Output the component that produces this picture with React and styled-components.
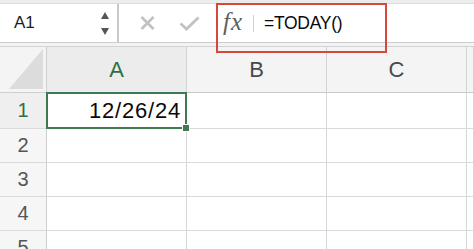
import React from 'react';
import styled, { createGlobalStyle } from 'styled-components';

const GlobalStyle = createGlobalStyle`
  html, body {
    margin: 0;
    padding: 0;
    background: #ffffff;
  }
  body {
    font-family: "Liberation Sans", Arial, sans-serif;
  }
`;

const Window = styled.div`
  width: 474px;
  height: 249px;
  overflow: hidden;
  background: #ffffff;
  display: flex;
  flex-direction: column;
`;

const TopEdge = styled.div`
  height: 3px;
  flex-shrink: 0;
  background: #ececec;
`;

const FormulaBar = styled.div`
  display: flex;
  align-items: center;
  height: 40px;
  box-sizing: border-box;
  flex-shrink: 0;
  border-top: 1px solid #dcdcdc;
  border-bottom: 1px solid #cdcdcd;
  position: relative;
  z-index: 2;
`;

const NameBox = styled.div`
  width: 119px;
  height: 100%;
  box-sizing: border-box;
  display: flex;
  align-items: center;
  justify-content: space-between;
  padding: 0 8px 0 14px;
  border-right: 2px solid #c9c9c9;
`;

const NameText = styled.span`
  font-size: 17px;
  color: #1c1c1c;
`;

const Spinner = styled.div`
  display: flex;
  flex-direction: column;
  gap: 9px;
`;

const Arrow = styled.span`
  width: 0;
  height: 0;
  border-left: 4px solid transparent;
  border-right: 4px solid transparent;
  ${p => p.down
    ? 'border-top: 7px solid #555555;'
    : 'border-bottom: 7px solid #555555;'}
`;

const Actions = styled.div`
  display: flex;
  align-items: center;
  gap: 24px;
  margin-left: 21px;
  svg {
    display: block;
  }
`;

const FormulaInput = styled.div`
  position: relative;
  width: 171px;
  height: 100%;
  box-sizing: border-box;
  margin-left: 16px;
  padding-left: 7px;
  display: flex;
  align-items: center;

  &::after {
    content: "";
    position: absolute;
    top: -1px;
    left: 0;
    width: 171px;
    height: 50px;
    box-sizing: border-box;
    border: 2px solid #d9473c;
    pointer-events: none;
  }
`;

const Fx = styled.span`
  font-family: "Liberation Serif", "Times New Roman", serif;
  font-style: italic;
  font-size: 25px;
  letter-spacing: 1px;
  color: #5f5f5f;
  line-height: 1;
  margin-top: -3px;
`;

const Divider = styled.span`
  width: 1px;
  height: 17px;
  background: #d2d2d2;
  margin-left: 10px;
`;

const FormulaText = styled.span`
  font-size: 17.5px;
  letter-spacing: -0.3px;
  color: #0a0a0a;
  margin-left: 10px;
`;

const Gap = styled.div`
  height: 3px;
  flex-shrink: 0;
  background: #f3f3f3;
`;

const Grid = styled.div`
  display: grid;
  grid-template-columns: 47px repeat(3, 140px) 1fr;
  grid-template-rows: 46px 36px;
  grid-auto-rows: 34px;
  border-top: 1px solid #d2d2d2;
`;

const Corner = styled.div`
  background: #f4f4f4;
  border-right: 1px solid #cfcfcf;
  border-bottom: 1px solid #cfcfcf;
  display: flex;
  align-items: flex-end;
  justify-content: flex-end;
  padding: 0 3px 3px 0;
  svg {
    display: block;
  }
`;

const ColHeader = styled.div`
  display: flex;
  align-items: center;
  justify-content: center;
  font-size: 22px;
  color: ${p => (p.active ? '#2f6f42' : '#4a4a4a')};
  background: ${p => (p.active ? '#ececec' : '#f4f4f4')};
  border-right: 1px solid #d4d4d4;
  border-bottom: 1px solid #c8c8c8;
`;

const RowHeader = styled.div`
  display: flex;
  align-items: center;
  justify-content: center;
  font-size: 20px;
  color: ${p => (p.active ? '#2f6f42' : '#555555')};
  background: ${p => (p.active ? '#efefef' : '#f6f6f6')};
  border-right: 1px solid #cfcfcf;
  border-bottom: 1px solid #dadada;
`;

const Cell = styled.div`
  position: relative;
  display: flex;
  align-items: center;
  justify-content: flex-end;
  padding-right: 5px;
  font-size: 22px;
  letter-spacing: 0.8px;
  color: #0a0a0a;
  border-right: 1px solid #d6d6d6;
  border-bottom: 1px solid #dadada;

  ${p => p.selected && `
    &::after {
      content: "";
      position: absolute;
      top: -1px;
      left: -1px;
      right: -1px;
      bottom: -1px;
      border: 2px solid #3d7a50;
      pointer-events: none;
    }
    &::before {
      content: "";
      position: absolute;
      right: -4px;
      bottom: -4px;
      width: 6px;
      height: 6px;
      background: #3d7a50;
      border: 1px solid #ffffff;
      z-index: 1;
    }
  `}
`;

const columns = ['A', 'B', 'C', ''];
const rows = [1, 2, 3, 4, 5];
const values = { A1: '12/26/24' };

export default function App() {
  return (
    <>
      <GlobalStyle />
      <Window>
        <TopEdge />
        <FormulaBar>
          <NameBox>
            <NameText>A1</NameText>
            <Spinner>
              <Arrow />
              <Arrow down />
            </Spinner>
          </NameBox>
          <Actions>
            <svg width="15" height="14" viewBox="0 0 15 14">
              <path d="M1.5 1 L13.5 13 M13.5 1 L1.5 13" stroke="#c2c2c2" strokeWidth="2.8" fill="none" />
            </svg>
            <svg width="21" height="15" viewBox="0 0 21 15">
              <path d="M1.5 7.5 L7.5 13 L19.5 1.5" stroke="#c2c2c2" strokeWidth="2.8" fill="none" />
            </svg>
          </Actions>
          <FormulaInput>
            <Fx>fx</Fx>
            <Divider />
            <FormulaText>=TODAY()</FormulaText>
          </FormulaInput>
        </FormulaBar>
        <Gap />
        <Grid>
          <Corner>
            <svg width="34" height="40" viewBox="0 0 34 40">
              <polygon points="0,40 34,0 34,40" fill="#dcdcdc" />
            </svg>
          </Corner>
          {columns.map((c, i) => (
            <ColHeader key={'h' + i} active={c === 'A'}>{c}</ColHeader>
          ))}
          {rows.map(r => (
            <React.Fragment key={r}>
              <RowHeader active={r === 1}>{r}</RowHeader>
              {columns.map((c, i) => (
                <Cell key={r + '-' + i} selected={c === 'A' && r === 1}>
                  {values[c + r] || ''}
                </Cell>
              ))}
            </React.Fragment>
          ))}
        </Grid>
      </Window>
    </>
  );
}
